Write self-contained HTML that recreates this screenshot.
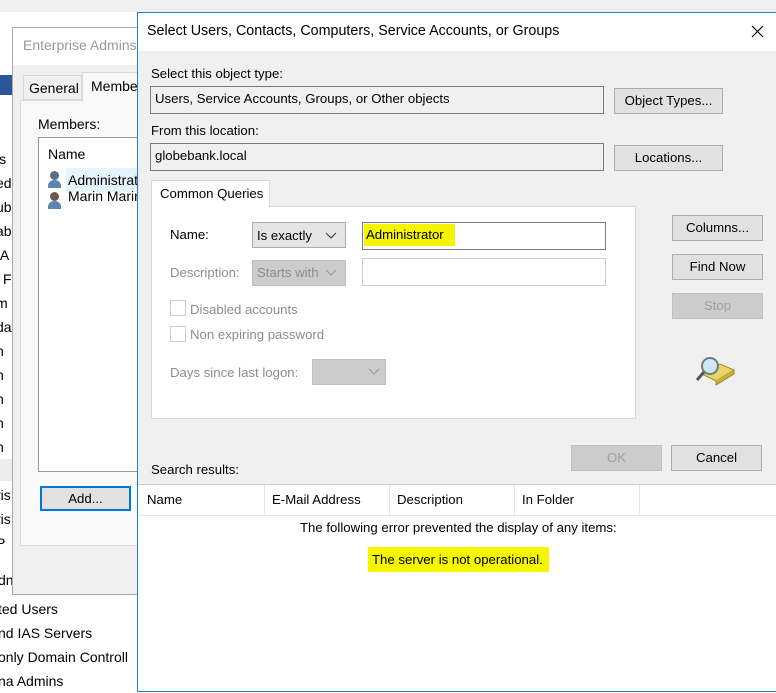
<!DOCTYPE html>
<html><head><style>
*{margin:0;padding:0;box-sizing:border-box}
body{width:776px;height:683px;position:relative;overflow:hidden;background:#fff;font-family:"Liberation Sans",sans-serif;font-size:13.2px;color:#000}
.a{position:absolute;white-space:nowrap}
.btn{position:absolute;background:#e1e1e1;border:1px solid #adadad;text-align:center;line-height:24px;font-size:13.2px}
.dis{color:#a0a0a0;background:#ccc;border-color:#bfbfbf}
.box{position:absolute;border:1px solid #7a7a7a;background:#f0f0f0}
.g{color:#8d8d8d}
</style></head><body>
<div class="a" style="left:0;top:0;width:776px;height:12px;background:#f0f0f0"></div>
<div class="a" style="left:0;top:12px;width:137px;height:671px;background:#fff"></div>
<div class="a" style="left:0;top:75px;width:12px;height:20px;background:#2b579a"></div>
<div class="a" style="left:-4px;top:147px;line-height:24px;font-size:14px">is<br>ed<br>ub<br>ab<br>tA<br>l F<br>m<br>da<br>n<br>n<br>n<br>n<br>n<br>ris<br>ris<br>ris<br>P</div>
<div class="a" style="left:0;top:459px;width:12px;height:22px;background:#ececec"></div>
<div class="a" style="left:-2px;top:572px;font-size:14px">dn</div>
<div class="a" style="left:-2px;top:597px;line-height:24px;font-size:14px">ted Users<br>nd IAS Servers<br>only Domain Controll<br>na Admins</div>
<div class="a" style="left:12px;top:27px;width:130px;height:568px;background:#f0f0f0;border:1px solid #aaa"></div>
<div class="a" style="left:13px;top:28px;width:125px;height:37px;background:#fff"></div>
<div class="a" style="left:23px;top:37px;font-size:14px;color:#999">Enterprise Admins</div>
<div class="a" style="left:20px;top:100px;width:120px;height:446px;background:#f9f9f9;border:1px solid #ddd"></div>
<div class="a" style="left:23px;top:75px;width:59px;height:25px;border:1px solid #d9d9d9;background:#f0f0f0"></div>
<div class="a" style="left:29px;top:80px;font-size:14px">General</div>
<div class="a" style="left:82px;top:72px;width:60px;height:30px;border:1px solid #d9d9d9;border-bottom:none;background:#f9f9f9"></div>
<div class="a" style="left:91px;top:78px;font-size:14px">Members</div>
<div class="a" style="left:38px;top:116px;font-size:14px">Members:</div>
<div class="a" style="left:38px;top:137px;width:104px;height:335px;background:#fff;border:1px solid #999"></div>
<div class="a" style="left:48px;top:146px;font-size:14px">Name</div>
<div class="a" style="left:66px;top:168px;width:76px;height:24px;background:#e5f3fb"></div>
<div class="a" style="left:50px;top:171px;width:9px;height:9px;border-radius:50%;background:#5a6f82"></div>
<div class="a" style="left:48px;top:180px;width:13px;height:8px;border-radius:6px 6px 0 0;background:#5a86b0"></div>
<div class="a" style="left:50px;top:192px;width:9px;height:9px;border-radius:50%;background:#6b5a48"></div>
<div class="a" style="left:48px;top:201px;width:13px;height:8px;border-radius:6px 6px 0 0;background:#5a86b0"></div>
<div class="a" style="left:68px;top:172px;font-size:14px">Administrator<br>Marin Marinov</div>
<div class="btn" style="left:40px;top:486px;width:91px;height:25px;border:2px solid #0078d7;line-height:21px">Add...</div>
<div class="a" style="left:137px;top:12px;width:640px;height:680px;border:1px solid #1883d7;background:#fff"></div>
<div class="a" style="left:138px;top:51px;width:638px;height:433px;background:#f0f0f0"></div>
<div class="a" style="left:147px;top:23px;font-size:14.3px">Select Users, Contacts, Computers, Service Accounts, or Groups</div>
<svg class="a" style="left:751px;top:25px" width="13" height="13"><path d="M1 1L12 12M12 1L1 12" stroke="#000" stroke-width="1.2"/></svg>
<div class="a" style="left:151px;top:66px">Select this object type:</div>
<div class="box" style="left:150px;top:86px;width:454px;height:28px"></div>
<div class="a" style="left:155px;top:91px">Users, Service Accounts, Groups, or Other objects</div>
<div class="btn" style="left:614px;top:88px;width:109px;height:26px">Object Types...</div>
<div class="a" style="left:151px;top:123px">From this location:</div>
<div class="box" style="left:150px;top:143px;width:454px;height:28px"></div>
<div class="a" style="left:155px;top:148px">globebank.local</div>
<div class="btn" style="left:614px;top:145px;width:109px;height:26px">Locations...</div>
<div class="a" style="left:151px;top:206px;width:485px;height:213px;background:#fff;border:1px solid #d9d9d9"></div>
<div class="a" style="left:151px;top:180px;width:119px;height:28px;background:#fff;border:1px solid #d9d9d9;border-bottom:none"></div>
<div class="a" style="left:160px;top:186px">Common Queries</div>
<div class="a" style="left:170px;top:227px">Name:</div>
<div class="a" style="left:252px;top:222px;width:94px;height:26px;background:#e5e5e5;border:1px solid #adadad"></div>
<div class="a" style="left:257px;top:228px">Is exactly</div>
<svg class="a" style="left:325px;top:232px" width="12" height="8"><path d="M1 1L6 6L11 1" stroke="#333" fill="none"/></svg>
<div class="a" style="left:362px;top:222px;width:244px;height:28px;background:#fff;border:1px solid #7a7a7a"></div>
<div class="a" style="left:364px;top:224px;width:91px;height:22px;background:#f5f500"></div>
<div class="a" style="left:366px;top:227px">Administrator</div>
<div class="a g" style="left:170px;top:265px">Description:</div>
<div class="a" style="left:252px;top:260px;width:94px;height:26px;background:#ccc;border:1px solid #bfbfbf"></div>
<div class="a g" style="left:257px;top:265px">Starts with</div>
<svg class="a" style="left:325px;top:269px" width="12" height="8"><path d="M1 1L6 6L11 1" stroke="#999" fill="none"/></svg>
<div class="a" style="left:362px;top:258px;width:244px;height:28px;background:#fff;border:1px solid #ccc"></div>
<div class="a" style="left:170px;top:300px;width:16px;height:16px;border:1px solid #ccc"></div>
<div class="a g" style="left:190px;top:302px">Disabled accounts</div>
<div class="a" style="left:170px;top:326px;width:16px;height:16px;border:1px solid #ccc"></div>
<div class="a g" style="left:190px;top:327px">Non expiring password</div>
<div class="a g" style="left:170px;top:365px">Days since last logon:</div>
<div class="a" style="left:312px;top:359px;width:74px;height:26px;background:#ccc;border:1px solid #bfbfbf"></div>
<svg class="a" style="left:368px;top:368px" width="12" height="8"><path d="M1 1L6 6L11 1" stroke="#999" fill="none"/></svg>
<div class="btn" style="left:672px;top:215px;width:91px;height:26px">Columns...</div>
<div class="btn" style="left:672px;top:254px;width:91px;height:26px">Find Now</div>
<div class="btn dis" style="left:672px;top:293px;width:91px;height:26px">Stop</div>
<svg class="a" style="left:694px;top:354px" width="44" height="32"><path d="M8 20L26 10L40 16L22 27Z" fill="#e8d56a" stroke="#a08a20"/><path d="M22 27L22 31L40 20L40 16" fill="#c9b13e" stroke="#a08a20"/><circle cx="16" cy="12" r="8" fill="#cfe6f5" stroke="#6b7d8a" stroke-width="2"/><path d="M10 18L3 26" stroke="#555" stroke-width="3"/></svg>
<div class="btn dis" style="left:571px;top:445px;width:91px;height:26px">OK</div>
<div class="btn" style="left:671px;top:445px;width:91px;height:26px">Cancel</div>
<div class="a" style="left:151px;top:462px">Search results:</div>
<div class="a" style="left:138px;top:484px;width:638px;height:32px;background:#fff;border-top:1px solid #ccc;border-bottom:1px solid #e5e5e5"></div>
<div class="a" style="left:264px;top:485px;width:1px;height:30px;background:#e5e5e5"></div>
<div class="a" style="left:389px;top:485px;width:1px;height:30px;background:#e5e5e5"></div>
<div class="a" style="left:514px;top:485px;width:1px;height:30px;background:#e5e5e5"></div>
<div class="a" style="left:639px;top:485px;width:1px;height:30px;background:#e5e5e5"></div>
<div class="a" style="left:147px;top:492px">Name</div>
<div class="a" style="left:272px;top:492px">E-Mail Address</div>
<div class="a" style="left:397px;top:492px">Description</div>
<div class="a" style="left:522px;top:492px">In Folder</div>
<div class="a" style="left:300px;top:520px">The following error prevented the display of any items:</div>
<div class="a" style="left:368px;top:547px;width:181px;height:25px;background:#f5f500"></div>
<div class="a" style="left:372px;top:552px">The server is not operational.</div>
</body></html>
